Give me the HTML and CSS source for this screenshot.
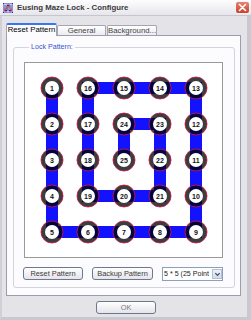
FILE: index.html
```html
<!DOCTYPE html>
<html>
<head>
<meta charset="utf-8">
<link rel="stylesheet" href="styles.css">
</head>
<body>
<div class="window">
  <div class="titlebar">
    <svg class="app-icon" viewBox="0 0 10 10">
      <rect x="0" y="0" width="10" height="10" fill="#1b2c9c"/>
      <path d="M1 1h8v8h-8z" fill="none" stroke="#fff" stroke-width="1"/>
      <path d="M3 1v6M5 3v6M7 1v6" stroke="#fff" stroke-width="1"/>
      <rect x="3.5" y="3.5" width="1" height="3" fill="#e02020"/>
      <rect x="5.5" y="1.5" width="1" height="3" fill="#e02020"/>
      <rect x="7.5" y="5.5" width="1" height="3" fill="#e02020"/>
      <rect x="1.5" y="5.5" width="1" height="3" fill="#e02020"/>
    </svg>
    <span class="title">Eusing Maze Lock - Configure</span>
    <span class="close">
      <svg viewBox="0 0 13 11" class="close-x"><path d="M3.5 2.5l6 6M9.5 2.5l-6 6" stroke="#fff" stroke-width="1.6" stroke-linecap="round"/></svg>
    </span>
  </div>
  <div class="frame">
    <div class="tabs">
      <div class="tab active">Reset Pattern</div>
      <div class="tab general">General</div>
      <div class="tab background">Background...</div>
    </div>
    <div class="panel">
      <fieldset class="group">
        <legend>Lock Pattern:</legend>
        <div class="canvas">
          <svg class="pattern" viewBox="0 0 197 194" width="197" height="194">
            <path class="pattern-line" d="M27 25V169H171V25H63V133H135V61H99V97"/>
            <g transform="translate(27,25)"><circle class="ring" r="11"/><circle class="core" r="7"/><text class="num" y="2.5">1</text></g>
            <g transform="translate(27,61)"><circle class="ring" r="11"/><circle class="core" r="7"/><text class="num" y="2.5">2</text></g>
            <g transform="translate(27,97)"><circle class="ring" r="11"/><circle class="core" r="7"/><text class="num" y="2.5">3</text></g>
            <g transform="translate(27,133)"><circle class="ring" r="11"/><circle class="core" r="7"/><text class="num" y="2.5">4</text></g>
            <g transform="translate(27,169)"><circle class="ring" r="11"/><circle class="core" r="7"/><text class="num" y="2.5">5</text></g>
            <g transform="translate(63,169)"><circle class="ring" r="11"/><circle class="core" r="7"/><text class="num" y="2.5">6</text></g>
            <g transform="translate(99,169)"><circle class="ring" r="11"/><circle class="core" r="7"/><text class="num" y="2.5">7</text></g>
            <g transform="translate(135,169)"><circle class="ring" r="11"/><circle class="core" r="7"/><text class="num" y="2.5">8</text></g>
            <g transform="translate(171,169)"><circle class="ring" r="11"/><circle class="core" r="7"/><text class="num" y="2.5">9</text></g>
            <g transform="translate(171,133)"><circle class="ring" r="11"/><circle class="core" r="7"/><text class="num" y="2.5">10</text></g>
            <g transform="translate(171,97)"><circle class="ring" r="11"/><circle class="core" r="7"/><text class="num" y="2.5">11</text></g>
            <g transform="translate(171,61)"><circle class="ring" r="11"/><circle class="core" r="7"/><text class="num" y="2.5">12</text></g>
            <g transform="translate(171,25)"><circle class="ring" r="11"/><circle class="core" r="7"/><text class="num" y="2.5">13</text></g>
            <g transform="translate(135,25)"><circle class="ring" r="11"/><circle class="core" r="7"/><text class="num" y="2.5">14</text></g>
            <g transform="translate(99,25)"><circle class="ring" r="11"/><circle class="core" r="7"/><text class="num" y="2.5">15</text></g>
            <g transform="translate(63,25)"><circle class="ring" r="11"/><circle class="core" r="7"/><text class="num" y="2.5">16</text></g>
            <g transform="translate(63,61)"><circle class="ring" r="11"/><circle class="core" r="7"/><text class="num" y="2.5">17</text></g>
            <g transform="translate(63,97)"><circle class="ring" r="11"/><circle class="core" r="7"/><text class="num" y="2.5">18</text></g>
            <g transform="translate(63,133)"><circle class="ring" r="11"/><circle class="core" r="7"/><text class="num" y="2.5">19</text></g>
            <g transform="translate(99,133)"><circle class="ring" r="11"/><circle class="core" r="7"/><text class="num" y="2.5">20</text></g>
            <g transform="translate(135,133)"><circle class="ring" r="11"/><circle class="core" r="7"/><text class="num" y="2.5">21</text></g>
            <g transform="translate(135,97)"><circle class="ring" r="11"/><circle class="core" r="7"/><text class="num" y="2.5">22</text></g>
            <g transform="translate(135,61)"><circle class="ring" r="11"/><circle class="core" r="7"/><text class="num" y="2.5">23</text></g>
            <g transform="translate(99,61)"><circle class="ring" r="11"/><circle class="core" r="7"/><text class="num" y="2.5">24</text></g>
            <g transform="translate(99,97)"><circle class="ring" r="11"/><circle class="core" r="7"/><text class="num" y="2.5">25</text></g>
          </svg>
        </div>
        <div class="actions">
          <button class="btn reset">Reset Pattern</button>
          <button class="btn backup">Backup Pattern</button>
          <div class="select">
            <span class="select-text">5 * 5 (25 Point</span>
            <span class="select-arrow"><svg viewBox="0 0 8 10" class="chev"><path d="M1.5 3.5l2.5 2.5l2.5-2.5" fill="none" stroke="#3a4a6a" stroke-width="1.4"/></svg></span>
          </div>
        </div>
      </fieldset>
    </div>
    <div class="footer">
      <button class="btn ok">OK</button>
    </div>
  </div>
</div>
</body>
</html>
```
FILE: styles.css
```css
* { box-sizing: border-box; }
html, body { margin: 0; padding: 0; }
body {
  width: 251px;
  height: 320px;
  overflow: hidden;
  font-family: "Liberation Sans", Arial, sans-serif;
  background: #e3e3e8;
}
.window {
  width: 251px;
  height: 320px;
  display: flex;
  flex-direction: column;
}
.titlebar {
  height: 16px;
  flex: none;
  display: flex;
  align-items: center;
  padding: 0 1px 0 3px;
  background: linear-gradient(#fdfdfe, #e6e6ec);
  border-bottom: 1px solid #c6c6ce;
}
.app-icon { width: 10px; height: 10px; flex: none; }
.title {
  flex: 1;
  margin-left: 4px;
  font-size: 7.8px;
  font-weight: bold;
  color: #3a3a3a;
  white-space: nowrap;
}
.close {
  width: 15px;
  height: 13px;
  flex: none;
  border: 1px solid #f4f4f4;
  border-radius: 3px;
  background: linear-gradient(#e8836f, #c8402a);
  display: flex;
  align-items: center;
  justify-content: center;
}
.close-x { width: 13px; height: 11px; }
.frame {
  flex: 1;
  display: flex;
  flex-direction: column;
  padding: 7px 6px 0 4px;
  border-left: 2px solid #d0d0d8;
  border-right: 4px solid #c8c8d0;
  border-bottom: 3px solid #c8c8d0;
}
.tabs {
  height: 12px;
  flex: none;
  display: flex;
  align-items: flex-end;
}
.tab {
  height: 10px;
  font-size: 7.8px;
  line-height: 9px;
  color: #444;
  text-align: center;
  white-space: nowrap;
  background: linear-gradient(#ffffff, #ececf1);
  border: 1px solid #a6a6b2;
  border-bottom: none;
  border-radius: 2px 2px 0 0;
}
.tab.active {
  width: 51px;
  height: 13px;
  margin-bottom: -1px;
  color: #000;
  line-height: 10px;
  background: #fcfcfe;
  border-top: 2px solid #3a76f0;
  position: relative;
  z-index: 1;
}
.tab.general { width: 49px; }
.tab.background { width: 50px; margin-left: 1px; }
.panel {
  height: 261px;
  flex: none;
  background: #fcfcfe;
  border: 1px solid #9c9cac;
  padding: 7px 5px 0 6px;
}
.group {
  margin: 0;
  width: 222px;
  height: 245px;
  padding: 10px 0 0 10px;
  border: 1px solid #d4d4dc;
  border-radius: 3px;
}
.group legend {
  font-size: 7.1px;
  line-height: 9px;
  color: #3454d4;
  padding: 0 2px;
  margin-left: 5px;
}
.canvas {
  width: 199px;
  height: 196px;
  background: #fff;
  border: 1px solid #9a9a9a;
}
.pattern { display: block; }
.pattern-line {
  fill: none;
  stroke: #1212ff;
  stroke-width: 12;
  stroke-linejoin: miter;
}
.ring {
  fill: #000;
  fill-opacity: 0.76;
  stroke: #c8184c;
  stroke-opacity: 0.85;
  stroke-width: 1;
}
.core { fill: #fff; }
.num {
  font-family: "Liberation Sans", Arial, sans-serif;
  font-size: 7px;
  font-weight: bold;
  fill: #111;
  text-anchor: middle;
}
.actions {
  margin: 9px 0 0 -1px;
  height: 14px;
  display: flex;
  align-items: flex-start;
  gap: 9px;
}
.btn {
  height: 13px;
  padding: 0;
  font-family: "Liberation Sans", Arial, sans-serif;
  font-size: 7.4px;
  line-height: 11px;
  color: #3a3a3a;
  background: linear-gradient(#ffffff, #e4e4ea);
  border: 1px solid #6c7890;
  border-radius: 3px;
}
.btn.reset { width: 60px; }
.btn.backup { width: 61px; }
.select {
  width: 61px;
  height: 14px;
  display: flex;
  align-items: stretch;
  background: #fff;
  border: 1px solid #8aa0bc;
  font-size: 7.1px;
  color: #222;
}
.select-text {
  flex: 1;
  white-space: nowrap;
  line-height: 12px;
  padding-left: 1px;
}
.select-arrow {
  width: 10px;
  flex: none;
  margin: 1px 0;
  background: linear-gradient(#eef2f8, #d4dcea);
  border: 1px solid #b4c0d2;
  display: flex;
  align-items: center;
  justify-content: center;
}
.chev { width: 7px; height: 9px; }
.footer {
  height: 21px;
  flex: none;
  display: flex;
  justify-content: center;
  padding: 5px 0 0 5px;
}
.btn.ok { width: 60px; color: #7a7a7a; }
```
